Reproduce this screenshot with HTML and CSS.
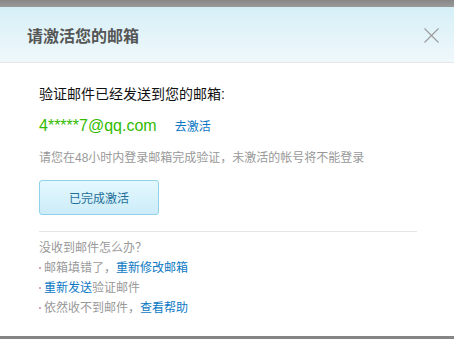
FILE: index.html
```html
<!DOCTYPE html>
<html lang="zh-CN">
<head>
<meta charset="utf-8">
<title>请激活您的邮箱</title>
<link rel="stylesheet" href="styles.css">
</head>
<body>
<div class="topbar"></div>
<div class="dialog">
  <div class="header">
    <h1 class="title">请激活您的邮箱</h1>
    <span class="close" aria-label="关闭">
      <svg width="15" height="15" viewBox="0 0 15 15"><path d="M0.5 0.5L14.5 14.5M14.5 0.5L0.5 14.5" stroke="#9a9a9a" stroke-width="1.1" fill="none"/></svg>
    </span>
  </div>
  <div class="content">
    <p class="sent">验证邮件已经发送到您的邮箱:</p>
    <p class="email-row"><span class="email">4*****7@qq.com</span><a class="link go" href="#">去激活</a></p>
    <p class="hint">请您在48小时内登录邮箱完成验证，未激活的帐号将不能登录</p>
    <button class="done">已完成激活</button>
    <div class="divider"></div>
    <p class="faq-title">没收到邮件怎么办？</p>
    <ul class="faq">
      <li>邮箱填错了，<a class="link" href="#">重新修改邮箱</a></li>
      <li><a class="link" href="#">重新发送</a>验证邮件</li>
      <li>依然收不到邮件，<a class="link" href="#">查看帮助</a></li>
    </ul>
  </div>
</div>
<div class="bottombar"></div>
</body>
</html>
```

FILE: styles.css
```css
html, body {
  margin: 0;
  padding: 0;
  height: 339px;
  overflow: hidden;
}
body {
  display: flex;
  flex-direction: column;
  background: #fff;
  font-family: "Liberation Sans", "Noto Sans CJK SC", sans-serif;
  font-size: 12px;
}
.topbar {
  height: 7px;
  background: linear-gradient(#878787, #9a9a9a);
}
.bottombar {
  height: 3px;
  background: #858585;
}
.dialog {
  flex: 1;
  display: flex;
  flex-direction: column;
}
.header {
  height: 55px;
  border-bottom: 1px solid #e4e6e7;
  background: linear-gradient(#d6eff7, #eff8fb);
  display: flex;
  align-items: center;
  justify-content: space-between;
  padding: 0 15px 0 27px;
}
.title {
  margin: 0;
  font-size: 16px;
  font-weight: bold;
  color: #555;
  font-family: "Noto Sans CJK SC", sans-serif;
}
.close {
  display: flex;
  width: 15px;
  height: 15px;
  margin-top: 1px;
}
.content {
  padding: 21px 37px 0 39px;
}
p {
  margin: 0;
}
.sent {
  font-size: 14px;
  line-height: 20px;
  color: #111;
}
.email-row {
  margin-top: 12px;
  line-height: 20px;
  display: flex;
  align-items: baseline;
}
.email {
  font-size: 16px;
  color: #33bb00;
  font-family: "Liberation Sans", sans-serif;
}
.link {
  color: #0b78c4;
  text-decoration: none;
}
.go {
  margin-left: 18px;
  font-size: 12px;
}
.hint {
  margin-top: 11px;
  line-height: 20px;
  color: #999;
}
.done {
  display: block;
  margin-top: 12px;
  width: 120px;
  height: 35px;
  border: 1px solid #90d2ea;
  border-radius: 3px;
  background: linear-gradient(#e4f8fe, #ccecf8);
  color: #1f6f98;
  font-family: "Noto Sans CJK SC", sans-serif;
  font-size: 12px;
  padding: 0;
}
.divider {
  margin-top: 16px;
  height: 1px;
  background: #e6e6e6;
}
.faq-title {
  margin-top: 6px;
  line-height: 20px;
  color: #999;
}
.faq {
  list-style: none;
  margin: 0;
  padding: 0;
}
.faq li {
  line-height: 20px;
  color: #999;
  display: flex;
  align-items: center;
}
.faq li::before {
  content: "";
  width: 2px;
  height: 2px;
  background: #d4a6c4;
  margin-right: 3px;
}
```
